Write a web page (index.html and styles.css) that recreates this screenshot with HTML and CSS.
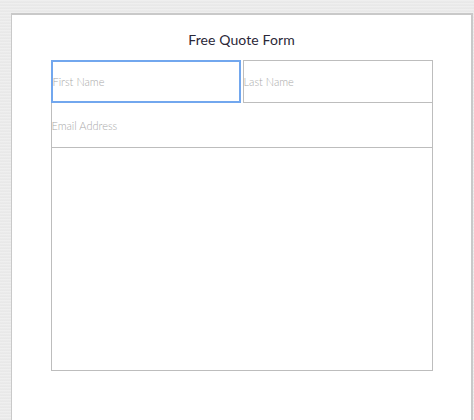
FILE: index.html
```html
<!DOCTYPE html>
<html>
<head>
<meta charset="utf-8">
<link rel="stylesheet" href="styles.css">
</head>
<body>
<div class="page">
  <div class="card">
    <h1 class="title">Free Quote Form</h1>
    <form class="form">
      <div class="row">
        <input class="field first focused" type="text" placeholder="First Name">
        <input class="field last" type="text" placeholder="Last Name">
      </div>
      <input class="field email" type="text" placeholder="Email Address">
      <textarea class="field message"></textarea>
    </form>
  </div>
</div>
</body>
</html>
```
FILE: styles.css
```css
html, body {
  margin: 0;
  padding: 0;
  height: 100%;
  overflow: hidden;
}
body {
  background-color: #ebebeb;
  background-image: repeating-linear-gradient(180deg, #efefef 0px, #efefef 1px, #e6e6e6 2px, #ebebeb 3px);
  font-family: "Lato", "Open Sans", sans-serif;
}
.page {
  padding: 13px 1px 0 11px;
}
.card {
  background: #ffffff;
  border: 1px solid #c9c9c9;
  border-right-width: 2px;
  border-top-width: 2px;
  border-bottom: none;
  height: 407px;
  box-sizing: border-box;
  padding-top: 16px;
}
.title {
  margin: 0;
  text-align: center;
  font-weight: 400;
  font-size: 14px;
  line-height: 17px;
  color: #2b2838;
  letter-spacing: 0.1px;
}
.form {
  width: 382px;
  margin: 12px auto 0;
  display: flex;
  flex-direction: column;
}
.row {
  display: flex;
  gap: 2px;
}
.field {
  box-sizing: border-box;
  border: 1px solid #bdbdbd;
  background: #fff;
  margin: 0;
  padding: 0;
  font-family: "Lato", "Open Sans", sans-serif;
  font-weight: 300;
  font-size: 11px;
  color: #333;
  outline: none;
  border-radius: 0;
}
.field::placeholder {
  color: #a9a9a9;
}
.first {
  width: 190px;
  height: 43px;
  border: 2px solid #72a7ee;
}
.last {
  flex: 1;
  height: 43px;
}
.email {
  height: 45px;
  width: 100%;
  border-top: none;
}
.message {
  height: 223px;
  width: 100%;
  border-top: none;
  resize: none;
  display: block;
}
```
